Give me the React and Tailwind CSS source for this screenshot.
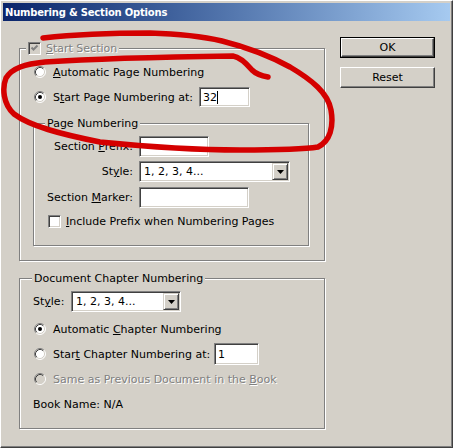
import React from 'react';

const font = "font-['DejaVu_Sans',Verdana,sans-serif]";

const Radio = ({ checked, disabled }) => (
    <svg width="12" height="12" viewBox="0 0 12 12" className="shrink-0">
        <circle cx="6" cy="6" r="5" fill={disabled ? '#d4d0c8' : '#ffffff'} />
        <path d="M2.11 9.89 A5.5 5.5 0 0 1 9.89 2.11" fill="none" stroke="#808080" strokeWidth="1" />
        <path d="M9.89 2.11 A5.5 5.5 0 0 1 2.11 9.89" fill="none" stroke="#ffffff" strokeWidth="1" />
        <path d="M2.82 9.18 A4.5 4.5 0 0 1 9.18 2.82" fill="none" stroke="#404040" strokeWidth="1" />
        <path d="M9.18 2.82 A4.5 4.5 0 0 1 2.82 9.18" fill="none" stroke="#d4d0c8" strokeWidth="1" />
        {checked && <circle cx="6" cy="6" r="2" fill="#000000" />}
    </svg>
);

const Checkbox = ({ checked, disabled }) => (
    <div
        className={`w-[13px] h-[13px] shrink-0 border border-t-[#808080] border-l-[#808080] border-b-white border-r-white shadow-[inset_1px_1px_0_#404040,inset_-1px_-1px_0_#d4d0c8] ${disabled ? 'bg-[#d4d0c8]' : 'bg-white'}`}
    >
        {checked && (
            <svg width="11" height="11" viewBox="0 0 11 11">
                <path d="M2.5 4.5 L4.5 6.5 L8.5 2.5" fill="none" stroke={disabled ? '#808080' : '#000'} strokeWidth="2" />
            </svg>
        )}
    </div>
);

const Field = ({ width, height = 'h-[21px]', children }) => (
    <div
        className={`${width} ${height} shrink-0 bg-white border border-t-[#808080] border-l-[#808080] border-b-white border-r-white shadow-[inset_1px_1px_0_#404040,inset_-1px_-1px_0_#d4d0c8] flex items-center pl-[3px]`}
    >
        {children}
    </div>
);

const Select = ({ width, value }) => (
    <div
        className={`${width} h-[21px] shrink-0 bg-white border border-t-[#808080] border-l-[#808080] border-b-white border-r-white shadow-[inset_1px_1px_0_#404040,inset_-1px_-1px_0_#d4d0c8] flex items-center p-[1px]`}
    >
        <span className="flex-1 pl-[3px]">{value}</span>
        <div className="w-[16px] h-full bg-[#d4d0c8] border border-t-[#d4d0c8] border-l-[#d4d0c8] border-b-[#404040] border-r-[#404040] shadow-[inset_1px_1px_0_#fff,inset_-1px_-1px_0_#808080] flex items-center justify-center">
            <svg width="7" height="4" viewBox="0 0 7 4">
                <path d="M0 0h7L3.5 4z" fill="#000" />
            </svg>
        </div>
    </div>
);

const Group = ({ legend, legendLeft, className, children }) => (
    <div className={`relative border border-[#808080] shadow-[1px_1px_0_#fff,inset_1px_1px_0_#fff] ${className}`}>
        <div className={`absolute ${legendLeft} -top-[8px] h-[14px] bg-[#d4d0c8] px-[2px] flex items-center gap-[5px]`}>
            {legend}
        </div>
        {children}
    </div>
);

const Disabled = ({ children }) => (
    <span className="text-[#808080] [text-shadow:1px_1px_0_#fff]">{children}</span>
);

const RadioRow = ({ checked, disabled, children, className = '' }) => (
    <div className={`flex items-center gap-[7px] ${className}`}>
        <Radio checked={checked} disabled={disabled} />
        {children}
    </div>
);

export default function App() {
    return (
        <div className={`relative w-[453px] h-[448px] bg-[#d4d0c8] border border-t-white border-l-white border-r-[#404040] border-b-[#404040] shadow-[inset_-1px_-1px_0_#808080] text-[11px] leading-[13px] text-black ${font}`}>
            {/* title bar */}
            <div className="mx-[2px] mt-[2px] h-[18px] bg-gradient-to-r from-[#0a246a] to-[#a6caf0] flex items-center pl-[2px]">
                <span className="text-white font-bold text-[10px] tracking-[-0.2px]">Numbering &amp; Section Options</span>
            </div>

            <div className="flex items-start pl-[18px]">
                <div className="flex flex-col pt-[27px]">
                    <Group
                        className="w-[306px] h-[213px]"
                        legendLeft="left-[6px]"
                        legend={
                            <>
                                <Checkbox checked disabled />
                                <Disabled><u>S</u>tart Section</Disabled>
                            </>
                        }
                    >
                        <div className="flex flex-col pl-[14px]">
                            <RadioRow className="mt-[13px] h-[20px]">
                                <span><u>A</u>utomatic Page Numbering</span>
                            </RadioRow>
                            <RadioRow checked className="mt-[5px] h-[20px]">
                                <span className="w-[139px] shrink-0 whitespace-nowrap">S<u>t</u>art Page Numbering at:</span>
                                <Field width="w-[51px]" height="h-[20px]">
                                    <span>32</span>
                                    <span className="w-[1px] h-[13px] bg-black"></span>
                                </Field>
                            </RadioRow>

                            <Group
                                className="ml-[-1px] mt-[16px] w-[276px] h-[123px]"
                                legendLeft="left-[11px]"
                                legend={<span>Page Numbering</span>}
                            >
                                <div className="flex flex-col">
                                    <div className="mt-[12px] h-[21px] flex items-center">
                                        <span className="w-[99px] text-right">Section <u>P</u>refix:</span>
                                        <div className="ml-[6px]"><Field width="w-[70px]" /></div>
                                    </div>
                                    <div className="mt-[4px] h-[21px] flex items-center">
                                        <span className="w-[99px] text-right">St<u>y</u>le:</span>
                                        <div className="ml-[6px]"><Select width="w-[151px]" value="1, 2, 3, 4..." /></div>
                                    </div>
                                    <div className="mt-[5px] h-[21px] flex items-center">
                                        <span className="w-[99px] text-right">Section <u>M</u>arker:</span>
                                        <div className="ml-[6px]"><Field width="w-[110px]" /></div>
                                    </div>
                                    <div className="mt-[7px] h-[13px] flex items-center gap-[5px] pl-[14px]">
                                        <Checkbox />
                                        <span><u>I</u>nclude Prefix when Numbering Pages</span>
                                    </div>
                                </div>
                            </Group>
                        </div>
                    </Group>

                    <Group
                        className="mt-[17px] w-[306px] h-[151px]"
                        legendLeft="left-[12px]"
                        legend={<span>Document Chapter Numbering</span>}
                    >
                        <div className="flex flex-col">
                            <div className="mt-[12px] h-[21px] flex items-center pl-[13px]">
                                <span className="w-[38px]">St<u>y</u>le:</span>
                                <Select width="w-[110px]" value="1, 2, 3, 4..." />
                            </div>
                            <div className="flex flex-col gap-[3px] mt-[6px] pl-[14px]">
                                <RadioRow checked className="h-[22px]">
                                    <span>Automatic <u>C</u>hapter Numbering</span>
                                </RadioRow>
                                <RadioRow className="h-[22px]">
                                    <span className="w-[154px] shrink-0 whitespace-nowrap">Star<u>t</u> Chapter Numbering at:</span>
                                    <Field width="w-[45px]" height="h-[22px]">
                                        <span>1</span>
                                    </Field>
                                </RadioRow>
                                <RadioRow disabled className="h-[22px]">
                                    <Disabled>Same as Previous Document in the <u>B</u>ook</Disabled>
                                </RadioRow>
                                <div className="h-[22px] flex items-center -ml-[1px]">
                                    <span>Book Name: N/A</span>
                                </div>
                            </div>
                        </div>
                    </Group>
                </div>

                <div className="flex flex-col ml-[15px] pt-[16px]">
                    <button className="w-[95px] h-[21px] border border-black bg-[#d4d0c8] flex">
                        <span className="flex-1 flex items-center justify-center border border-t-white border-l-white border-b-[#404040] border-r-[#404040] shadow-[inset_-1px_-1px_0_#808080]">
                            OK
                        </span>
                    </button>
                    <button className="mt-[9px] w-[95px] h-[21px] bg-[#d4d0c8] flex items-center justify-center border border-t-white border-l-white border-b-[#404040] border-r-[#404040] shadow-[inset_-1px_-1px_0_#808080]">
                        Reset
                    </button>
                </div>
            </div>

            {/* red hand-drawn circle over the dialog */}
            <svg
                className="absolute -left-[1px] -top-[1px] pointer-events-none"
                width="453"
                height="448"
                viewBox="0 0 453 448"
            >
                <path
                    d="M43 38 C70 35 110 33 150 33 C185 34 205 37 222 41 C250 48 270 56 290 67 C312 80 328 93 331 110 C334 127 330 141 318 147 C300 150 270 150 240 150 C200 150 150 147 100 142 C60 134 30 126 14 114 C3 104 2 88 6 78 C12 68 25 64 45 62 C90 59 160 57 233 56 C240 57 246 63 252 70 C257 75 262 76 268 77"
                    fill="none"
                    stroke="#d40000"
                    strokeWidth="5.5"
                    strokeLinecap="round"
                    strokeLinejoin="round"
                />
            </svg>
        </div>
    );
}
